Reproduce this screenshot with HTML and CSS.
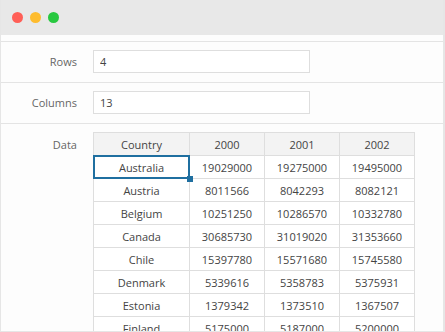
FILE: index.html
```html
<!DOCTYPE html>
<html lang="en">
<head>
  <meta charset="UTF-8" />
  <meta name="viewport" content="width=device-width, initial-scale=1.0"/>
  <title>Data Grid Editor</title>
  <link rel="stylesheet" href="styles.css">
</head>
<body>

  <div class="window">
    <div class="titlebar">
      <span class="dot red"></span>
      <span class="dot yellow"></span>
      <span class="dot green"></span>
    </div>

    <div class="content">
      <div class="field">
        <label class="label" for="rows">Rows</label>
        <input class="input" id="rows" value="4" />
      </div>

      <div class="field">
        <label class="label" for="cols">Columns</label>
        <input class="input" id="cols" value="13" />
      </div>

      <div class="field field-data">
        <span class="label">Data</span>
        <table class="grid">
          <colgroup>
            <col class="col-country">
            <col class="col-year">
            <col class="col-year">
            <col class="col-year">
          </colgroup>
          <thead>
            <tr><th>Country</th><th>2000</th><th>2001</th><th>2002</th></tr>
          </thead>
          <tbody id="gridBody"></tbody>
        </table>
      </div>
    </div>
  </div>

  <script>
    const rows = [
      ['Australia', 19029000, 19275000, 19495000],
      ['Austria', 8011566, 8042293, 8082121],
      ['Belgium', 10251250, 10286570, 10332780],
      ['Canada', 30685730, 31019020, 31353660],
      ['Chile', 15397780, 15571680, 15745580],
      ['Denmark', 5339616, 5358783, 5375931],
      ['Estonia', 1379342, 1373510, 1367507],
      ['Finland', 5175000, 5187000, 5200000]
    ];

    const body = document.getElementById('gridBody');
    rows.forEach((row, i) => {
      const tr = document.createElement('tr');
      row.forEach((val, j) => {
        const td = document.createElement('td');
        td.textContent = val;
        if (i === 0 && j === 0) {
          td.className = 'selected';
          const sel = document.createElement('div');
          sel.className = 'selection';
          const handle = document.createElement('div');
          handle.className = 'handle';
          sel.appendChild(handle);
          td.appendChild(sel);
        }
        tr.appendChild(td);
      });
      body.appendChild(tr);
    });
  </script>

</body>
</html>
```

FILE: styles.css
```css
body {
  margin: 0;
  background: #fff;
  font-family: "Open Sans", Arial, sans-serif;
  font-size: 11px;
  color: #444;
}
.window {
  height: 332px;
  box-sizing: border-box;
  border: 1px solid #e6e6e6;
  border-top: none;
  border-right-width: 2px;
  overflow: hidden;
  background: #fdfdfd;
}
.titlebar {
  height: 35px;
  margin: 0 -2px 0 -1px;
  background: #e8e8e8;
  display: flex;
  align-items: center;
  gap: 7px;
  padding-left: 12px;
}
.dot {
  width: 11px;
  height: 11px;
  border-radius: 50%;
}
.red { background: #ff5f57; }
.yellow { background: #febc2e; }
.green { background: #28c840; }
.content {
  padding-top: 6px;
}
.field {
  display: flex;
  align-items: center;
  border-top: 1px solid #e4e4e4;
  padding: 8px 0 9px;
}
.label {
  width: 76px;
  margin-right: 16px;
  text-align: right;
  color: #666;
  line-height: 23px;
  flex-shrink: 0;
}
.input {
  width: 217px;
  height: 23px;
  box-sizing: border-box;
  border: 1px solid #dedede;
  padding: 0 6px;
  margin: 0;
  font: inherit;
  color: #444;
  background: #fff;
}
.field-data {
  align-items: flex-start;
}
.field-data .label {
  padding-top: 1px;
}
.grid {
  border-collapse: collapse;
  table-layout: fixed;
  width: 322px;
  background: #fff;
}
.col-country { width: 96px; }
.col-year { width: 75px; }
.grid th,
.grid td {
  border: 1px solid #dedede;
  height: 22px;
  padding: 0;
  text-align: center;
  font-weight: normal;
  color: #444;
}
.grid th {
  background: #f3f3f3;
}
.grid td.selected {
  position: relative;
}
.selection {
  position: absolute;
  left: -1px;
  top: -1px;
  right: -1px;
  bottom: -1px;
  border: 2px solid #1f6fa0;
}
.handle {
  position: absolute;
  right: -5px;
  bottom: -5px;
  width: 6px;
  height: 6px;
  background: #1f6fa0;
}
```
